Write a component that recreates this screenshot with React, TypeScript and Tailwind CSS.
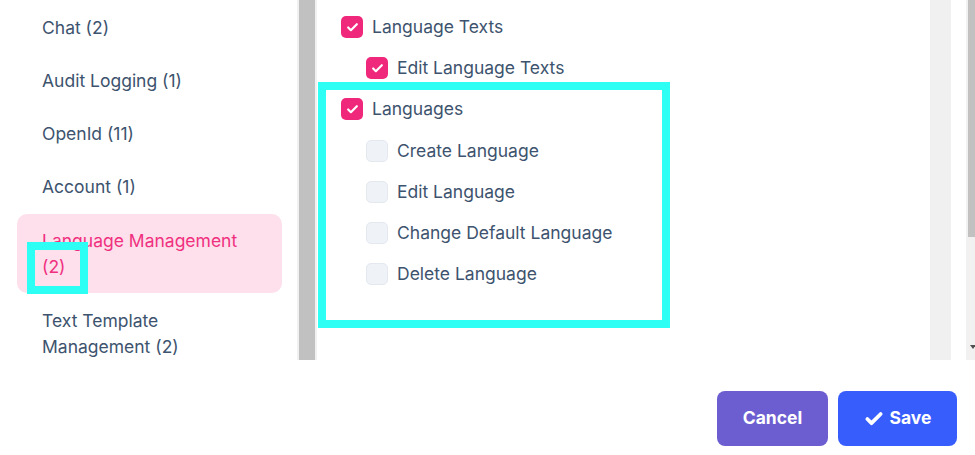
import { Check } from 'lucide-react'

const GROUPS = [
  { name: 'Chat (2)' },
  { name: 'Audit Logging (1)' },
  { name: 'OpenId (11)' },
  { name: 'Account (1)' },
  { name: 'Language Management (2)', active: true },
  { name: 'Text Template Management (2)' },
]

const PERMISSIONS = [
  { label: 'Language Texts', checked: true, level: 0 },
  { label: 'Edit Language Texts', checked: true, level: 1 },
  { label: 'Languages', checked: true, level: 0 },
  { label: 'Create Language', checked: false, level: 1 },
  { label: 'Edit Language', checked: false, level: 1 },
  { label: 'Change Default Language', checked: false, level: 1 },
  { label: 'Delete Language', checked: false, level: 1 },
]

function Checkbox({ checked }: { checked: boolean }) {
  return checked ? (
    <span className="flex h-[22px] w-[22px] shrink-0 items-center justify-center rounded-[5px] bg-[#f0287c]">
      <Check className="h-[13px] w-[13px] text-white" strokeWidth={4} />
    </span>
  ) : (
    <span className="h-[22px] w-[22px] shrink-0 rounded-[5px] border border-[#e4e9f0] bg-[#eff2f7]" />
  )
}

export default function App() {
  return (
    <div
      className="relative flex h-[455px] w-[975px] flex-col overflow-hidden bg-white text-[17.5px] text-[#3d536e]"
      style={{ fontFamily: 'Inter, "Noto Sans", sans-serif' }}
    >
      <div className="flex h-[360px]">
        {/* Permission groups */}
        <div className="flex w-[297px] flex-col pt-[1px]">
          {GROUPS.map((g) => (
            <div
              key={g.name}
              className={`ml-[17px] mr-[15px] rounded-[10px] px-[25px] py-[13.5px] leading-[26px] ${
                g.active ? 'my-[1px] bg-[#fde0ec] text-[#f0307f]' : ''
              }`}
            >
              {g.name}
            </div>
          ))}
        </div>

        {/* Left scrollbar */}
        <div className="flex w-[20px] bg-[#f1f1f1] px-[2px]">
          <div className="w-full bg-[#c1c1c1]" />
        </div>

        {/* Permissions */}
        <div className="flex flex-1 flex-col gap-[19.2px] pl-[24px] pt-[16px]">
          {PERMISSIONS.map((p) => (
            <div
              key={p.label}
              className={`flex h-[22px] items-center gap-[9px] ${p.level === 1 ? 'pl-[25px]' : ''}`}
            >
              <Checkbox checked={p.checked} />
              <span className="leading-[22px]">{p.label}</span>
            </div>
          ))}
        </div>

        {/* Inner scrollbar track */}
        <div className="w-[21px] bg-[#f0f0f0]" />
        <div className="w-[15px]" />

        {/* Page scrollbar */}
        <div className="relative flex w-[9px] flex-col bg-[#f1f1f1] pl-[2px]">
          <div className="h-[237px] w-full bg-[#c1c1c1]" />
          <span className="absolute left-[4px] top-[345px] h-0 w-0 border-x-[3px] border-t-[4px] border-x-transparent border-t-[#505050]" />
        </div>
      </div>

      {/* Footer */}
      <div className="flex flex-1 items-start justify-end gap-[10px] pr-[18px] pt-[31px]">
        <button className="h-[55px] w-[111px] rounded-[8px] bg-[#6c5dd0] text-[17.5px] font-bold text-white">
          Cancel
        </button>
        <button className="flex h-[55px] w-[119px] items-center justify-center gap-[6px] rounded-[8px] bg-[#385dfd] text-[17.5px] font-bold text-white">
          <Check className="h-[20px] w-[20px]" strokeWidth={4.5} />
          Save
        </button>
      </div>

      {/* Annotation highlights */}
      <div className="absolute left-[318px] top-[82px] h-[246px] w-[352px] border-[8px] border-[#2efff4]" />
      <div className="absolute left-[27px] top-[242px] h-[52px] w-[61px] border-[8px] border-[#2efff4]" />
    </div>
  )
}
